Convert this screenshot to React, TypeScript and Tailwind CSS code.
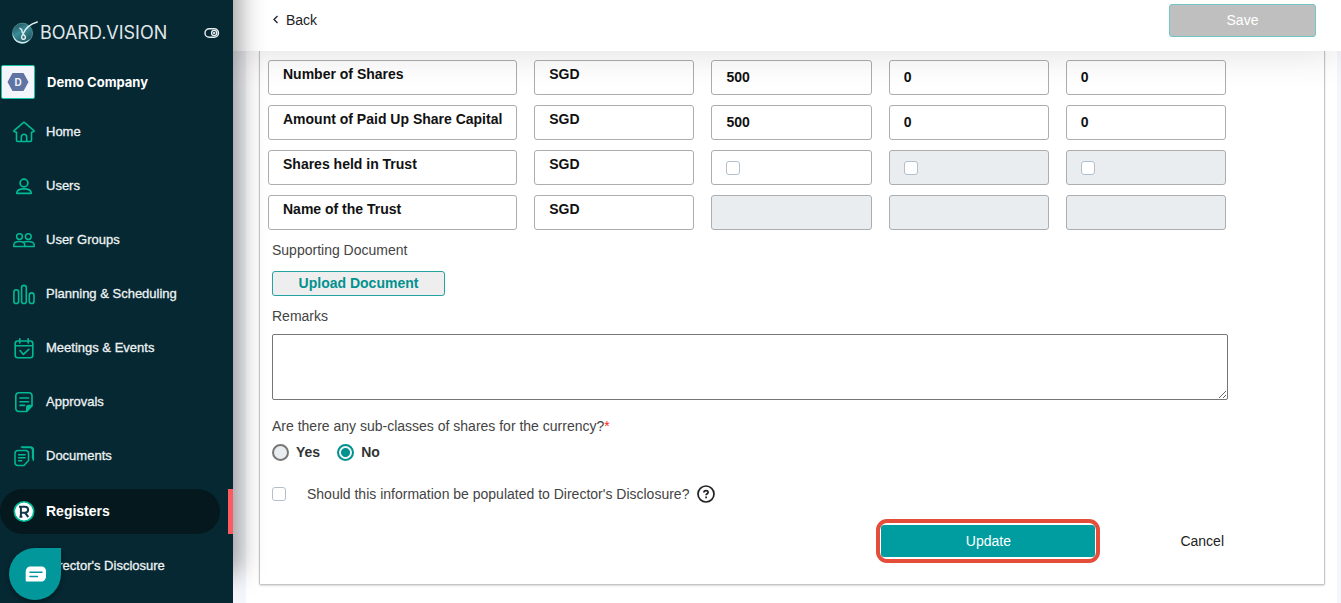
import type { ReactNode } from "react";
import clsx from "clsx";

const iconClass = "h-6 w-6 shrink-0 fill-none stroke-[#02b996]";

function HomeIcon() {
  return (
    <svg viewBox="0 0 24 24" className={iconClass} strokeWidth="1.6" strokeLinejoin="round" strokeLinecap="round">
      <path d="M4.5 12.3v8c0 .8.4 1.2 1.200 1.200h3.600v-4.300c0-1.700 1.200-2.900 2.700-2.900s2.700 1.200 2.700 2.900v4.300h3.600c.8 0 1.200-.4 1.200-1.200v-8M9.300 21.500h5.400M4.500 12.300l-2.300-.8c-.4-.2-.4-.6-.1-.9l9.200-8c.5-.4.9-.4 1.400 0l9.200 8c.3.300.3.700-.1.900l-2.300.8" />
    </svg>
  );
}

function UserIcon() {
  return (
    <svg viewBox="0 0 24 24" className={iconClass} strokeWidth="1.7" strokeLinejoin="round">
      <circle cx="12" cy="9" r="3.900" />
      <path d="M4.800 19.300c0-3 3-4.400 7.200-4.400s7.200 1.400 7.200 4.400z" />
    </svg>
  );
}

function GroupIcon() {
  return (
    <svg viewBox="0 0 24 24" className={iconClass} strokeWidth="1.5" strokeLinejoin="round">
      <circle cx="7.500" cy="8.600" r="2.900" />
      <circle cx="16.300" cy="8.600" r="2.900" />
      <path d="M1.800 18.500v-1.300c0-2.500 2.300-3.600 5.500-3.600 2.700 0 5.500 1.100 5.500 3.600v1.300zM10.800 14.700c1.200-.8 3-1.100 5-1.100 3.200 0 6.400 1.100 6.400 3.600v1.300h-9.400" />
    </svg>
  );
}

function BarsIcon() {
  return (
    <svg viewBox="0 0 24 24" className={iconClass} strokeWidth="1.600">
      <rect x="1.900" y="7.700" width="4.700" height="13.800" rx="2.350" />
      <rect x="9.600" y="3.400" width="4.700" height="18.100" rx="2.350" />
      <rect x="17.300" y="10.900" width="4.700" height="10.600" rx="2.350" />
    </svg>
  );
}

function CalendarIcon() {
  return (
    <svg viewBox="0 0 24 24" className={iconClass} strokeWidth="1.600" strokeLinejoin="round" strokeLinecap="round">
      <rect x="3.200" y="5" width="17.600" height="16.800" rx="2.500" />
      <path d="M3.200 9.800h17.600M7.800 2.800v4.200M16.200 2.800v4.200M8 14.600l3.300 3.800 5.500-5" />
    </svg>
  );
}

function NoteIcon() {
  return (
    <svg viewBox="0 0 24 24" className={iconClass} strokeWidth="1.600" strokeLinejoin="round" strokeLinecap="round">
      <path d="M7 2.800h9.800c2 0 3.200 1.200 3.200 3.200v9.500l-5.300 6H7c-2 0-3.200-1.200-3.200-3.200V6c0-2 1.200-3.200 3.200-3.200zM8 8h8.500M8 11.700h8.500M8 15.400h4.500" />
      <path d="M14.800 21v-3.600c0-1.200.6-1.800 1.800-1.800H20z" className="fill-[#02b996]" />
    </svg>
  );
}

function DocumentsIcon() {
  return (
    <svg viewBox="0 0 24 24" className={iconClass} strokeWidth="1.500" strokeLinejoin="round" strokeLinecap="round">
      <path d="M6 6.400h7.500c2 0 3 1 3 3v7l-4.600 5.200H6c-2 0-3-1-3-3V9.400c0-2 1-3 3-3zM6.600 10.800h6.500M6.600 13.800h6.500M6.600 16.800h3.200" />
      <path d="M9.500 2.900h8.800c2 0 3 1 3 3v10.300M10.500 3.600h7.500c1.700 0 2.600.9 2.600 2.600v8" />
    </svg>
  );
}

function RegisteredIcon() {
  return (
    <svg viewBox="0 0 24 24" className="h-6 w-6 shrink-0 fill-none">
      <circle cx="12" cy="12.500" r="9.700" fill="#fff" stroke="#02b996" strokeWidth="1.600" />
      <path d="M8.900 18V7.800h3.800c2.200 0 3.400 1.100 3.400 2.900s-1.200 3-3.400 3H8.900M12.800 13.700l3.500 4.300M7 7.800h2M7.400 17.700h3" stroke="#12384a" strokeWidth="2" />
    </svg>
  );
}

function Logo() {
  return (
    <svg viewBox="0 0 28 26" className="h-[26px] w-7 shrink-0">
      <defs>
        <linearGradient id="orb" x1="0" y1="0" x2="0.6" y2="1">
          <stop offset="0" stopColor="#1d4653" />
          <stop offset="0.5" stopColor="#3a8c97" />
          <stop offset="1" stopColor="#235461" />
        </linearGradient>
      </defs>
      <circle cx="11.500" cy="13.200" r="10" fill="url(#orb)" stroke="#51949b" strokeWidth="0.900" />
      <path d="M1.500 13c1 5 4 8.300 9.500 9 3 .300 6-1 8-3.500-1.500 3.500-4.500 5.200-8 5-5.500-.3-9.500-4.500-9.500-10.500z" fill="#d3eeee" />
      <path
        d="M9 8.300c1.500.6 2.300 2 2.300 4.200M26.300 2C19.500 4 14.500 8 12.300 13.500c-.7 1.700-1.700 2.700-1.700 4 0 2.500 3.900 2.400 3.800-.2 0-1.100-.6-1.900-1.500-2.300"
        fill="none"
        stroke="#dff1f0"
        strokeWidth="1.400"
        strokeLinecap="round"
      />
    </svg>
  );
}

type NavItem = { label: string; icon?: ReactNode; active?: boolean };

const navItems: NavItem[] = [
  { label: "Home", icon: <HomeIcon /> },
  { label: "Users", icon: <UserIcon /> },
  { label: "User Groups", icon: <GroupIcon /> },
  { label: "Planning & Scheduling", icon: <BarsIcon /> },
  { label: "Meetings & Events", icon: <CalendarIcon /> },
  { label: "Approvals", icon: <NoteIcon /> },
  { label: "Documents", icon: <DocumentsIcon /> },
  { label: "Registers", icon: <RegisteredIcon />, active: true },
  { label: "Director's Disclosure" },
];

function Sidebar() {
  return (
    <aside className="relative z-20 flex w-[233px] shrink-0 flex-col bg-[#062832] text-white shadow-[6px_-30px_24px_rgba(0,0,0,0.4)]">
      <div className="flex h-[65px] items-center pt-px pl-[11px]">
        <Logo />
        <span className="ml-px font-['Inter'] text-[18px] leading-6 text-[#e0e7e8]">BOARD.VISION</span>
        <button type="button" aria-label="Toggle sidebar" className="mr-3 ml-auto">
          <svg viewBox="0 0 18 12" className="h-3 w-[18px] fill-none stroke-[#e8eeef]" strokeWidth="1.400">
            <rect x="2" y="1.700" width="13.500" height="8.600" rx="4.300" />
            <circle cx="11.200" cy="6" r="2.600" />
            <circle cx="11.200" cy="6" r="0.500" />
          </svg>
        </button>
      </div>
      <a href="#company" className="flex h-[34px] items-center pl-px">
        <span className="flex h-[34px] w-[34px] items-center justify-center rounded-[2px] border border-[#15c6a6] bg-[#f4f5fb]">
          <svg viewBox="0 0 22 20" className="h-5 w-[22px]">
            <path d="M5.500 1h11L21.500 10l-5 9h-11L.5 10z" fill="#6074a3" />
            <text x="11" y="13.500" textAnchor="middle" fontSize="10" fontWeight="700" fontFamily="Inter, sans-serif" fill="#eef1f8">D</text>
          </svg>
        </span>
        <span className="ml-3 font-['Inter'] text-[13px] leading-5 font-bold">Demo Company</span>
      </a>
      <nav className="mt-[6px]">
        <ul>
          {navItems.map((item) => (
            <li key={item.label} className={clsx("flex items-center", item.active ? "h-14" : "h-[54px]")}>
              <a
                href={"#" + item.label.toLowerCase().replace(/\W+/g, "-")}
                className={clsx(
                  "flex h-[45px] w-[220px] items-center gap-[10px] rounded-full pl-3 leading-5",
                  item.active
                    ? "bg-[#04181e] text-sm font-bold"
                    : "text-[13px] text-[#eef2f3] [-webkit-text-stroke:0.3px_#eef2f3]",
                )}
              >
                {item.icon ?? <span className="w-6" />}
                {item.label}
              </a>
              {item.active && <span className="ml-auto h-[45px] w-[5px] bg-[#ff5a5f]" />}
            </li>
          ))}
        </ul>
      </nav>
      <button
        type="button"
        aria-label="Open chat"
        className="fixed bottom-[3px] left-[9px] flex h-[52px] w-[52px] items-center justify-center rounded-full rounded-tr-[6px] bg-[#02989b] shadow-[0_2px_5px_rgba(0,0,0,0.4)]"
      >
        <svg viewBox="0 0 22 16" className="ml-[2px] h-4 w-[22px]">
          <path d="M6 .5h10c3.500 0 5 2 5 5v4.500c0 3.500-2 5.500-5 5.500H1.500c-.5 0-.8-.3-.8-.8V6C.700 2.500 2.500.5 6 .5z" fill="#fff" />
          <path d="M5 6.200h12M5 10.500h7.500" stroke="#02989b" strokeWidth="1.500" strokeLinecap="round" />
        </svg>
      </button>
    </aside>
  );
}

const fieldClass = "h-[35px] w-full min-w-0 rounded-[3px] border border-[#adadad] px-[14px] text-sm font-bold text-[#111]";
const checkClass =
  "h-[14px] w-[14px] shrink-0 appearance-none rounded-[3px] border border-[#b4bfcc] bg-white checked:bg-[#02989b]";

type ShareRow = { id: string; label: string; kind: "text" | "check"; values: string[]; disabled: boolean[] };

const shareRows: ShareRow[] = [
  { id: "number", label: "Number of Shares", kind: "text", values: ["500", "0", "0"], disabled: [false, false, false] },
  { id: "paid-up", label: "Amount of Paid Up Share Capital", kind: "text", values: ["500", "0", "0"], disabled: [false, false, false] },
  { id: "in-trust", label: "Shares held in Trust", kind: "check", values: ["", "", ""], disabled: [false, true, true] },
  { id: "trust-name", label: "Name of the Trust", kind: "text", values: ["", "", ""], disabled: [true, true, true] },
];

function ShareFields() {
  return (
    <div className="flex flex-col gap-[10px]">
      {shareRows.map((row) => (
        <div key={row.id} className="grid grid-cols-[249fr_160fr_160fr_160fr_160fr] gap-[17px]">
          <div id={row.id} className={clsx(fieldClass, "pt-[3px] leading-5 whitespace-nowrap")}>{row.label}</div>
          <div className={clsx(fieldClass, "pt-[3px] leading-5")}>SGD</div>
          {row.values.map((value, i) =>
            row.kind === "check" ? (
              <div key={i} className={clsx(fieldClass, "flex items-center", row.disabled[i] && "bg-[#e9edf0]")}>
                <input type="checkbox" aria-labelledby={row.id} disabled={row.disabled[i]} className={checkClass} />
              </div>
            ) : (
              <input
                key={i}
                type="text"
                aria-labelledby={row.id}
                defaultValue={value}
                disabled={row.disabled[i]}
                className={clsx(fieldClass, "pb-[2px]", row.disabled[i] && "bg-[#e9edf0]")}
              />
            ),
          )}
        </div>
      ))}
    </div>
  );
}

const radioClass =
  "h-[17px] w-[17px] appearance-none rounded-full border-2 border-[#777] bg-[#e9edf0] checked:border-[#02918f] checked:bg-[radial-gradient(circle,#02918f_4px,#eef3f5_5px)]";

export default function App() {
  return (
    <div className="flex h-screen overflow-hidden bg-[#f5f6fb] font-['Liberation_Sans',Arial,sans-serif] text-sm text-[#444]">
      <Sidebar />
      <div className="flex min-w-0 flex-1 flex-col">
        <header className="relative z-10 flex h-[51px] shrink-0 items-start justify-between bg-white pt-1 pr-[25px] pl-[39px] shadow-[0_0_40px_rgba(0,0,0,0.14)]">
          <a href="#back" className="flex h-8 items-center gap-[7px] text-[#222]">
            <svg viewBox="0 0 7 10" className="h-[10px] w-[7px] fill-none stroke-[#222]" strokeWidth="1.300">
              <path d="M5.500 1L2 4.500 5.500 8" />
            </svg>
            Back
          </a>
          <button type="button" className="h-[33px] w-[147px] rounded-[3px] border border-[#72c5c5] bg-[#bfbfbf] pb-[2px] text-white">
            Save
          </button>
        </header>
        <main className="mr-1 ml-[13px] flex-1 bg-white pr-3 pl-[13px]">
          <section className="rounded-b-[2px] border-x border-b border-[#c4c4c4] pr-[98px] pb-[21px] pl-2 shadow-[0_1px_2px_rgba(0,0,0,0.15)]">
            <form className="pt-[9px]">
              <ShareFields />
              <div className="-mr-[2px] pl-1">
                <p className="pt-[10px] leading-5">Supporting Document</p>
                <button
                  type="button"
                  className="mt-[11px] block h-[25px] w-[173px] rounded-[3px] border border-[#23a3a2] bg-[#eee] pb-[2px] leading-5 font-bold text-[#02918f]"
                >
                  Upload Document
                </button>
                <label htmlFor="remarks" className="mt-[10px] block leading-5">Remarks</label>
                <textarea id="remarks" className="mt-2 block h-[66px] w-full rounded-[2px] border border-[#767676] bg-white p-2" />
                <fieldset className="pt-4">
                  <legend className="contents leading-5">
                    Are there any sub-classes of shares for the currency?<span className="text-[#f22]">*</span>
                  </legend>
                  <div className="mt-[6px] flex h-5 items-center gap-[17px] font-bold text-[#333]">
                    <label className="flex items-center gap-[7px]">
                      <input type="radio" name="subclasses" className={radioClass} />
                      Yes
                    </label>
                    <label className="flex items-center gap-[7px]">
                      <input type="radio" name="subclasses" defaultChecked className={radioClass} />
                      No
                    </label>
                  </div>
                </fieldset>
                <div className="mt-[22px] flex h-5 items-center">
                  <input id="populate" type="checkbox" className={checkClass} />
                  <label htmlFor="populate" className="ml-[21px]">
                    Should this information be populated to Director's Disclosure?
                  </label>
                  <svg viewBox="0 0 18 18" className="ml-2 h-[18px] w-[18px] fill-none stroke-[#222]" strokeWidth="1.700">
                    <circle cx="9" cy="9" r="8" />
                    <path d="M6.900 7.500c0-1.200.9-1.900 2.100-1.900s2.100.7 2.100 1.800c0 1.300-2 1.400-2 2.900M9.100 11.500v1.700" />
                  </svg>
                </div>
                <div className="mt-[15px] flex items-center justify-end">
                  <div className="rounded-[11px] border-4 border-[#e44d3a] px-px py-[2px]">
                    <button type="button" className="block h-8 w-[214px] rounded-[3px] bg-[#009da0] pb-px text-white">
                      Update
                    </button>
                  </div>
                  <button type="button" className="ml-20 h-8 pr-1 pb-px text-[#222]">Cancel</button>
                </div>
              </div>
            </form>
          </section>
        </main>
      </div>
    </div>
  );
}
